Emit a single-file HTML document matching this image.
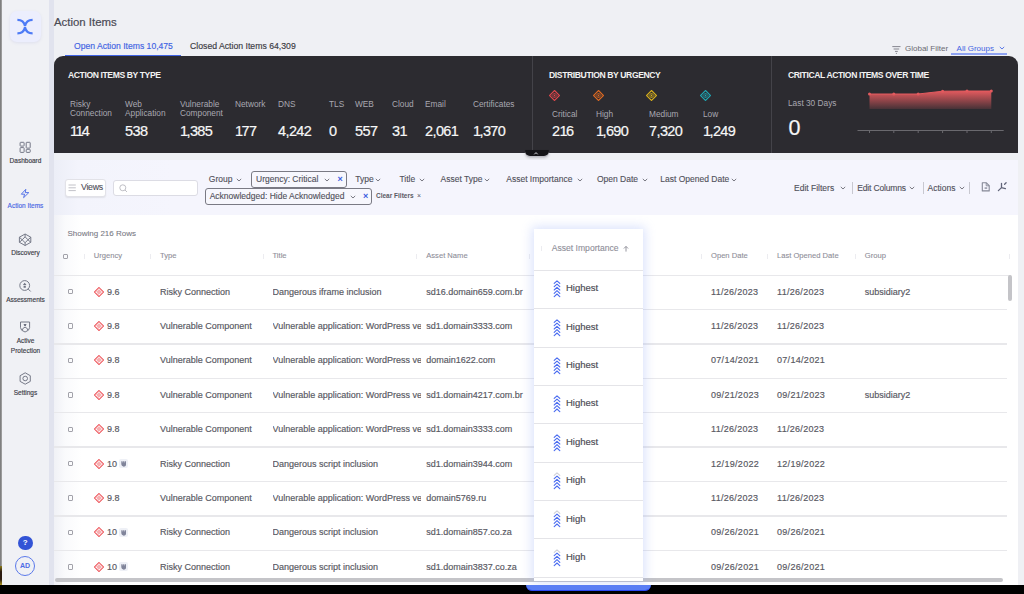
<!DOCTYPE html>
<html><head><meta charset="utf-8">
<style>
*{margin:0;padding:0;box-sizing:border-box}
html,body{width:1024px;height:594px;overflow:hidden;background:#000;font-family:"Liberation Sans",sans-serif}
.a{position:absolute;white-space:nowrap}
#app{position:absolute;left:0;top:0;width:1024px;height:585px;background:#eff0f4;overflow:hidden}
#lb{position:absolute;left:0;top:0;width:2px;height:585px;background:linear-gradient(90deg,#727272,#a8a8a8)}
#sb{position:absolute;left:2px;top:0;width:47px;height:585px;background:#f0f1f5;border-bottom-left-radius:3px}
#sbs{position:absolute;left:49px;top:0;width:5px;height:585px;background:#e1e3ee}
.nav{position:absolute;left:2px;width:47px;text-align:center;font-size:6.5px;color:#3c3c46;line-height:8px;-webkit-text-stroke:0.15px currentColor}
.logo{position:absolute;left:10px;top:11px;width:31px;height:31px;border-radius:7px;background:#eceefd;box-shadow:0 1px 3px rgba(120,130,200,.15)}
#panel{position:absolute;left:54px;top:56px;width:964px;height:97px;background:#2c2b30;border-radius:9px 9px 0 0}
.ph{position:absolute;font-weight:bold;color:#f2f2f2;font-size:8.6px;letter-spacing:-0.4px}
.pl{position:absolute;color:#a9a8b0;font-size:8.3px;line-height:9.4px}
.pn{position:absolute;color:#f7f7f7;font-size:14.5px;line-height:16px;letter-spacing:-0.6px;-webkit-text-stroke:0.2px #f7f7f7}
.o{letter-spacing:-1.6px}
.div{position:absolute;top:0;width:1px;height:97px;background:#444349}
#fbar{position:absolute;left:54px;top:160px;width:964px;height:55.6px;background:linear-gradient(90deg,#eceef7,#f3f4fc 24px,#f5f5fd 120px)}
.ff{position:absolute;font-size:8.5px;color:#50505a;line-height:10px;-webkit-text-stroke:0.12px #50505a}
.chip{position:absolute;border:1px solid #7a7a84;border-radius:3px;background:#f7f7fd;font-size:8.5px;color:#50505a;line-height:14px}
#tbl{position:absolute;left:54px;top:215px;width:964px;height:370px;background:#fff}
.th{position:absolute;font-size:7.6px;color:#8e8e98;line-height:9px;-webkit-text-stroke:0.1px #8e8e98}
.td{position:absolute;font-size:9px;color:#595963;line-height:10px;-webkit-text-stroke:0.17px #595963}
.dt{letter-spacing:0.3px}
.rb{position:absolute;left:54px;width:953px;height:1.4px;background:#e8e8eb}
.cb{position:absolute;width:6px;height:6px;border:1px solid #a2a2aa;border-radius:1px}
</style></head><body>
<div id="app">
  <div id="lb"></div>
  <div class="a" style="left:0;top:566px;width:2.3px;height:19px;background:linear-gradient(180deg,#8a7a18,#2a1a10 30%,#2a1a10 70%,#b09a20)"></div>
  <div id="sb"></div>
  <div id="sbs"></div>
  <div class="logo"></div>
  <svg class="a" style="left:14px;top:16px" width="24" height="21" viewBox="14 16 24 21"><path d="M17.4 19.9 C21.8 19.9 24.2 22 25 26 C25.8 22 28.2 19.9 32.6 19.9 M17.4 33.3 C21.8 33.3 24.2 31.2 25 27.2 C25.8 31.2 28.2 33.3 32.6 33.3" fill="none" stroke="#4d7bf6" stroke-width="2.2" stroke-linecap="butt" stroke-linejoin="miter" stroke-miterlimit="2"/></svg>
  <svg class="a" style="left:18px;top:140px" width="14" height="14" viewBox="18 140 14 14"><g fill="none" stroke="#747887" stroke-width="1"><rect x="20.1" y="142.3" width="4" height="3.8" rx="0.6"/><rect x="20.1" y="147.6" width="4" height="4.8" rx="0.6"/><rect x="26.2" y="142.3" width="4" height="5.8" rx="0.6"/><rect x="26.2" y="149.3" width="4" height="3.1" rx="0.6"/></g></svg>
  <div class="nav" style="top:156.8px">Dashboard</div>
  <svg class="a" style="left:18px;top:187px" width="14" height="14" viewBox="18 187 14 14"><path d="M25.8 189.3 L21.3 194.2 L24.6 194.2 L23.6 197.7 L28.8 192.6 L25.3 192.6 Z" fill="none" stroke="#4f6ee6" stroke-width="0.95" stroke-linejoin="round"/></svg>
  <div class="nav" style="top:202px;color:#4a68e4">Action Items</div>
  <svg class="a" style="left:18px;top:232px" width="14" height="16" viewBox="18 232 14 16"><g fill="none" stroke="#6f7382" stroke-width="0.95" stroke-linejoin="round"><path d="M25.1 234 L30.8 237.2 L30.8 242.3 L25.1 245.5 L19.4 242.3 L19.4 237.2 Z"/><path d="M25.1 236.8 L28 239.8 L25.1 242.7 L22.2 239.8 Z"/><path d="M25.1 234 V236.8 M30.8 237.2 L28 239.8 M30.8 242.3 L28 239.8 M25.1 245.5 V242.7 M19.4 242.3 L22.2 239.8 M19.4 237.2 L22.2 239.8"/></g></svg>
  <div class="nav" style="top:249px">Discovery</div>
  <svg class="a" style="left:18px;top:279px" width="14" height="14" viewBox="18 279 14 14"><g fill="none" stroke="#6f7382" stroke-width="0.95"><circle cx="24.7" cy="285.5" r="4.9"/><path d="M28.3 289.1 L30.4 291.2" stroke-linecap="round"/></g><path d="M24.7 282.8 L26.5 285 H22.9 Z M23.6 285.8 H25.8 V287.8 H23.6Z" fill="#6f7382"/></svg>
  <div class="nav" style="top:296px">Assessments</div>
  <svg class="a" style="left:18px;top:320px" width="14" height="14" viewBox="18 320 14 14"><path d="M20.5 322 H29.6 V327.6 Q29.6 330.6 25.05 332 Q20.5 330.6 20.5 327.6 Z" fill="none" stroke="#6f7382" stroke-width="0.95" stroke-linejoin="round"/><path d="M23.5 324.3 H26.6 L25.05 326.6 Z" fill="#3f4356"/><path d="M22.3 330 Q23 327.3 25.05 327.3 Q27.1 327.3 27.8 330" fill="none" stroke="#6f7382" stroke-width="0.9"/></svg>
  <div class="nav" style="top:336.8px">Active</div>
  <div class="nav" style="top:346.6px">Protection</div>
  <svg class="a" style="left:18px;top:371px" width="14" height="15" viewBox="18 371 14 15"><g fill="none" stroke="#6f7382" stroke-width="0.95" stroke-linejoin="round"><path d="M25.2 372.8 L30.3 375.7 L30.3 381.4 L25.2 384.2 L20.1 381.4 L20.1 375.7 Z"/><circle cx="25.2" cy="378.5" r="2.3"/></g></svg>
  <div class="nav" style="top:388.5px">Settings</div>
  <div class="a" style="left:17.8px;top:535.5px;width:14.8px;height:14.8px;border-radius:50%;background:#3354d6;color:#fff;font-size:8px;font-weight:bold;text-align:center;line-height:14.8px">?</div>
  <div class="a" style="left:15px;top:556px;width:20px;height:20px;border-radius:50%;border:1px solid #5b79ea;color:#4d6be6;font-size:7px;font-weight:bold;text-align:center;line-height:18px">AD</div>
  <svg class="a" style="left:891px;top:44.5px" width="11" height="10" viewBox="891 44 11 10"><path d="M892.3 45.6 H900.5 M893.6 48 H899.2 M895 50.4 H897.8 M895.9 52.4 H896.9" stroke="#7a7a84" stroke-width="0.9"/></svg>
  <div class="a" style="left:905px;top:44px;font-size:8px;color:#6a6a72;line-height:10px">Global Filter</div>
  <div class="a" style="left:956.6px;top:44px;font-size:8px;color:#3f63e3;line-height:10px">All Groups</div>
  <svg class="a" style="left:999px;top:46.3px" width="6" height="4" viewBox="0 0 6 4"><path d="M0.8 0.9 L3 3 L5.2 0.9" fill="none" stroke="#4a6ae6" stroke-width="0.9"/></svg>
  <div class="a" style="left:951.3px;top:53px;width:56px;height:1.5px;background:#8fa3f2"></div>
  <div class="a" style="left:54px;top:15px;font-size:11.4px;color:#4a4a54;line-height:14px;-webkit-text-stroke:0.2px #4a4a54">Action Items</div>
  <div class="a" style="left:74px;top:41px;font-size:8.6px;color:#3f63e3;line-height:10px;-webkit-text-stroke:0.15px #3f63e3">Open Action Items 10,475</div>
  <div class="a" style="left:65px;top:54.5px;width:116px;height:1.5px;background:#3f63e3"></div>
  <div class="a" style="left:190px;top:41px;font-size:8.7px;color:#3a3a42;line-height:10px;-webkit-text-stroke:0.15px #3a3a42">Closed Action Items 64,309</div>

  <div id="panel">
    <div class="ph" style="left:14px;top:14px">ACTION ITEMS BY TYPE</div>
    <div class="pl" style="left:16px;top:44px">Risky<br>Connection</div>
    <div class="pl" style="left:71px;top:44px">Web<br>Application</div>
    <div class="pl" style="left:126px;top:44px">Vulnerable<br>Component</div>
    <div class="pl" style="left:181px;top:44px">Network</div>
    <div class="pl" style="left:224px;top:44px">DNS</div>
    <div class="pl" style="left:275px;top:44px">TLS</div>
    <div class="pl" style="left:301px;top:44px">WEB</div>
    <div class="pl" style="left:338px;top:44px">Cloud</div>
    <div class="pl" style="left:371px;top:44px">Email</div>
    <div class="pl" style="left:419px;top:44px">Certificates</div>
    <div class="pn" style="left:16px;top:67px"><span class="o">1</span><span class="o">1</span>4</div>
    <div class="pn" style="left:71px;top:67px">538</div>
    <div class="pn" style="left:126px;top:67px"><span class="o">1</span>,385</div>
    <div class="pn" style="left:181px;top:67px"><span class="o">1</span>77</div>
    <div class="pn" style="left:224px;top:67px">4,242</div>
    <div class="pn" style="left:275px;top:67px">0</div>
    <div class="pn" style="left:301px;top:67px">557</div>
    <div class="pn" style="left:338px;top:67px">3<span class="o">1</span></div>
    <div class="pn" style="left:371px;top:67px">2,06<span class="o">1</span></div>
    <div class="pn" style="left:419px;top:67px"><span class="o">1</span>,370</div>
    <div class="div" style="left:478px"></div>
    <div class="ph" style="left:495px;top:14px">DISTRIBUTION BY URGENCY</div>
    <svg class="a" style="left:495px;top:34px" width="11" height="11" viewBox="0 0 11 11"><path d="M5.5 0.5L10.5 5.5L5.5 10.5L0.5 5.5Z" fill="none" stroke="#e0474c" stroke-width="1.1"/><path d="M5.5 3L8 5.5L5.5 8L3 5.5Z" fill="none" stroke="#e0474c" stroke-width="0.9"/><circle cx="5.5" cy="5.5" r="0.9" fill="#e0474c"/></svg>
    <svg class="a" style="left:539px;top:34px" width="11" height="11" viewBox="0 0 11 11"><path d="M5.5 0.5L10.5 5.5L5.5 10.5L0.5 5.5Z" fill="none" stroke="#e06a22" stroke-width="1.1"/><path d="M5.5 3L8 5.5L5.5 8L3 5.5Z" fill="none" stroke="#e06a22" stroke-width="0.9"/><circle cx="5.5" cy="5.5" r="0.9" fill="#e06a22"/></svg>
    <svg class="a" style="left:592px;top:34px" width="11" height="11" viewBox="0 0 11 11"><path d="M5.5 0.5L10.5 5.5L5.5 10.5L0.5 5.5Z" fill="none" stroke="#d9b01c" stroke-width="1.1"/><path d="M5.5 3L8 5.5L5.5 8L3 5.5Z" fill="none" stroke="#d9b01c" stroke-width="0.9"/><circle cx="5.5" cy="5.5" r="0.9" fill="#d9b01c"/></svg>
    <svg class="a" style="left:646px;top:34px" width="11" height="11" viewBox="0 0 11 11"><path d="M5.5 0.5L10.5 5.5L5.5 10.5L0.5 5.5Z" fill="none" stroke="#1fa7b3" stroke-width="1.1"/><path d="M5.5 3L8 5.5L5.5 8L3 5.5Z" fill="none" stroke="#1fa7b3" stroke-width="0.9"/><circle cx="5.5" cy="5.5" r="0.9" fill="#1fa7b3"/></svg>
    <div class="pl" style="left:498px;top:53.8px">Critical</div>
    <div class="pl" style="left:542px;top:53.8px">High</div>
    <div class="pl" style="left:595px;top:53.8px">Medium</div>
    <div class="pl" style="left:649px;top:53.8px">Low</div>
    <div class="pn" style="left:498px;top:67px">2<span class="o">1</span>6</div>
    <div class="pn" style="left:542px;top:67px"><span class="o">1</span>,690</div>
    <div class="pn" style="left:595px;top:67px">7,320</div>
    <div class="pn" style="left:649px;top:67px"><span class="o">1</span>,249</div>
    <div class="div" style="left:717px"></div>
    <div class="ph" style="left:734px;top:14px">CRITICAL ACTION ITEMS OVER TIME</div>
    <div class="pl" style="left:734px;top:42.7px">Last 30 Days</div>
    <div class="pn" style="left:734.5px;top:60.3px;font-size:21.5px;line-height:24px">0</div>
    <svg class="a" style="left:800px;top:28px" width="160" height="52" viewBox="0 0 160 52">
      <defs><linearGradient id="g1" x1="0" y1="0" x2="0" y2="1"><stop offset="0" stop-color="#e25a5e"/><stop offset="1" stop-color="#e25a5e" stop-opacity="0.15"/></linearGradient></defs>
      <path d="M15.5 10 L39.8 10 L64.2 10 L88.6 7.2 L113 7 L137.3 7 L137.3 25 L15.5 25 Z" fill="url(#g1)"/>
      <path d="M15.5 10 L39.8 10 L64.2 10 L88.6 7.2 L113 7 L137.3 7" fill="none" stroke="#e25a5e" stroke-width="1"/>
      <g fill="#e25a5e"><circle cx="15.5" cy="10" r="1.5"/><circle cx="39.8" cy="10" r="1.5"/><circle cx="64.2" cy="10" r="1.5"/><circle cx="88.6" cy="7.2" r="1.5"/><circle cx="113" cy="7" r="1.5"/><circle cx="137.3" cy="7" r="1.5"/></g>
      <path d="M3.5 46.5 H149.7" stroke="#6a696e" stroke-width="1"/>
      <g stroke="#6a696e" stroke-width="1"><path d="M15.5 46 V49"/><path d="M39.8 46 V49"/><path d="M64.2 46 V49"/><path d="M88.6 46 V49"/><path d="M113 46 V49"/><path d="M137.3 46 V49"/></g>
    </svg>
  </div>
  <div class="a" style="left:525px;top:149.5px;width:23.5px;height:6.7px;background:#141416;border-radius:1px 1px 5px 5px;box-shadow:0 1.2px 0 rgba(185,185,192,.8),0 2px 3px rgba(0,0,0,.2)"></div>
  <svg class="a" style="left:532px;top:150.5px" width="8" height="4" viewBox="0 0 8 4"><path d="M2.3 3.3 L4 1.6 L5.7 3.3" fill="none" stroke="#d8d8dc" stroke-width="1"/></svg>

<!--GEN-->
  <div id="fbar"></div>
  <div class="a" style="left:65px;top:178.5px;width:41px;height:18px;border:1px solid #e2e2e8;border-radius:3px;background:#fff;box-shadow:0 1px 1.5px rgba(0,0,0,.08)"></div>
  <svg class="a" style="left:67.5px;top:184px" width="9" height="8" viewBox="0 0 9 8"><path d="M0.5 1H7.8M0.5 3.8H7.8M0.5 6.6H7.8" stroke="#b2b2ba" stroke-width="0.8"/></svg>
  <div class="a ff" style="left:81px;top:182.3px;font-size:8.8px;letter-spacing:-0.3px">Views</div>
  <div class="a" style="left:113px;top:180px;width:85px;height:16px;border:1px solid #dcdce4;border-radius:3px;background:#fff"></div>
  <svg class="a" style="left:119px;top:184px" width="9" height="9" viewBox="0 0 9 9"><circle cx="3.8" cy="3.8" r="3" fill="none" stroke="#b0b0b8" stroke-width="0.8"/><path d="M6 6L8 8" stroke="#b0b0b8" stroke-width="0.8"/></svg>
  <div class="a ff" style="left:208.8px;top:174px">Group</div>
  <svg class="a" style="left:236px;top:177.5px" width="6" height="4" viewBox="0 0 6 4"><path d="M0.8 0.9 L3 3 L5.2 0.9" fill="none" stroke="#6a6a74" stroke-width="0.9"/></svg>
  <div class="a ff" style="left:355.3px;top:174px">Type</div>
  <svg class="a" style="left:375px;top:177.5px" width="6" height="4" viewBox="0 0 6 4"><path d="M0.8 0.9 L3 3 L5.2 0.9" fill="none" stroke="#6a6a74" stroke-width="0.9"/></svg>
  <div class="a ff" style="left:399.4px;top:174px">Title</div>
  <svg class="a" style="left:419px;top:177.5px" width="6" height="4" viewBox="0 0 6 4"><path d="M0.8 0.9 L3 3 L5.2 0.9" fill="none" stroke="#6a6a74" stroke-width="0.9"/></svg>
  <div class="a ff" style="left:440.6px;top:174px">Asset Type</div>
  <svg class="a" style="left:484px;top:177.5px" width="6" height="4" viewBox="0 0 6 4"><path d="M0.8 0.9 L3 3 L5.2 0.9" fill="none" stroke="#6a6a74" stroke-width="0.9"/></svg>
  <div class="a ff" style="left:506.25px;top:174px">Asset Importance</div>
  <svg class="a" style="left:577px;top:177.5px" width="6" height="4" viewBox="0 0 6 4"><path d="M0.8 0.9 L3 3 L5.2 0.9" fill="none" stroke="#6a6a74" stroke-width="0.9"/></svg>
  <div class="a ff" style="left:596.9px;top:174px">Open Date</div>
  <svg class="a" style="left:642px;top:177.5px" width="6" height="4" viewBox="0 0 6 4"><path d="M0.8 0.9 L3 3 L5.2 0.9" fill="none" stroke="#6a6a74" stroke-width="0.9"/></svg>
  <div class="a ff" style="left:660.3px;top:174px">Last Opened Date</div>
  <svg class="a" style="left:731px;top:177.5px" width="6" height="4" viewBox="0 0 6 4"><path d="M0.8 0.9 L3 3 L5.2 0.9" fill="none" stroke="#6a6a74" stroke-width="0.9"/></svg>
  <div class="chip a" style="left:250.5px;top:170.5px;width:96px;height:17px"></div>
  <div class="a ff" style="left:256px;top:174px">Urgency: Critical</div>
  <svg class="a" style="left:324px;top:177.5px" width="6" height="4" viewBox="0 0 6 4"><path d="M0.8 0.9 L3 3 L5.2 0.9" fill="none" stroke="#6a6a74" stroke-width="0.9"/></svg>
  <div class="a" style="left:337.5px;top:172.5px;font-size:9px;font-weight:bold;color:#3b5de0;line-height:12px">×</div>
  <div class="chip a" style="left:204.5px;top:188px;width:167.5px;height:16.5px"></div>
  <div class="a ff" style="left:209.7px;top:191px">Acknowledged: Hide Acknowledged</div>
  <svg class="a" style="left:350px;top:194.5px" width="6" height="4" viewBox="0 0 6 4"><path d="M0.8 0.9 L3 3 L5.2 0.9" fill="none" stroke="#6a6a74" stroke-width="0.9"/></svg>
  <div class="a" style="left:363px;top:189.5px;font-size:9px;font-weight:bold;color:#3b5de0;line-height:12px">×</div>
  <div class="a" style="left:376px;top:191px;font-size:6.5px;font-weight:bold;color:#5a5a64;line-height:10px">Clear Filters</div>
  <div class="a" style="left:417px;top:191px;font-size:7px;color:#5a5a64;line-height:10px">×</div>
  <div class="a ff" style="left:794px;top:182.5px;letter-spacing:0px">Edit Filters</div>
  <svg class="a" style="left:840px;top:186px" width="6" height="4" viewBox="0 0 6 4"><path d="M0.8 0.9 L3 3 L5.2 0.9" fill="none" stroke="#6a6a74" stroke-width="0.9"/></svg>
  <div class="a ff" style="left:857.3px;top:182.5px;letter-spacing:-0.17px">Edit Columns</div>
  <svg class="a" style="left:909.2px;top:186px" width="6" height="4" viewBox="0 0 6 4"><path d="M0.8 0.9 L3 3 L5.2 0.9" fill="none" stroke="#6a6a74" stroke-width="0.9"/></svg>
  <div class="a ff" style="left:927.6px;top:182.5px;letter-spacing:0px">Actions</div>
  <svg class="a" style="left:959px;top:186px" width="6" height="4" viewBox="0 0 6 4"><path d="M0.8 0.9 L3 3 L5.2 0.9" fill="none" stroke="#6a6a74" stroke-width="0.9"/></svg>
  <div class="a" style="left:852px;top:181.5px;width:1px;height:12px;background:#c8c8d0"></div>
  <div class="a" style="left:922.5px;top:181.5px;width:1px;height:12px;background:#c8c8d0"></div>
  <div class="a" style="left:969.4px;top:181.5px;width:1px;height:12px;background:#c8c8d0"></div>
  <svg class="a" style="left:980px;top:181px" width="12" height="12" viewBox="980 181 12 12"><path d="M982.3 182.8 H986.4 L989.2 185.6 V190.9 H982.3 Z" fill="none" stroke="#858896" stroke-width="1.1" stroke-linejoin="round"/><path d="M986.2 182.9 V185.8 H989.1" fill="none" stroke="#858896" stroke-width="0.9"/><rect x="984.6" y="187.3" width="2.6" height="1.6" fill="#9a9caa"/></svg>
  <svg class="a" style="left:996px;top:181px" width="12" height="12" viewBox="996 181 12 12"><path d="M1001.5 183.3 V187.6 M1001.5 187.6 L998.4 190.6 M1001.5 187.6 L1005.4 188.6 M1004.6 184.3 L1006.1 182.8" fill="none" stroke="#62657a" stroke-width="1.3" stroke-linecap="round"/></svg>
  <div id="tbl"></div>
  <div class="a" style="left:54px;top:215px;width:28px;height:370px;background:linear-gradient(90deg,rgba(240,241,246,1),rgba(246,247,250,.6) 40%,rgba(255,255,255,0))"></div>
  <div class="a th" style="left:67.5px;top:228.5px;font-size:8px;color:#75757e;line-height:10px">Showing 216 Rows</div>
  <div class="cb a" style="left:62.6px;top:253.6px;width:5.8px;height:5.8px"></div>
  <div class="a th" style="left:93.8px;top:251.3px">Urgency</div>
  <div class="a" style="left:84px;top:254px;width:1px;height:5px;background:#ececf0"></div>
  <div class="a th" style="left:160.1px;top:251.3px">Type</div>
  <div class="a" style="left:150.1px;top:254px;width:1px;height:5px;background:#ececf0"></div>
  <div class="a th" style="left:272.5px;top:251.3px">Title</div>
  <div class="a" style="left:262.5px;top:254px;width:1px;height:5px;background:#ececf0"></div>
  <div class="a th" style="left:426.25px;top:251.3px">Asset Name</div>
  <div class="a" style="left:416px;top:254px;width:1px;height:5px;background:#ececf0"></div>
  <div class="a th" style="left:711px;top:251.3px">Open Date</div>
  <div class="a" style="left:701px;top:254px;width:1px;height:5px;background:#ececf0"></div>
  <div class="a th" style="left:777px;top:251.3px">Last Opened Date</div>
  <div class="a" style="left:766.7px;top:254px;width:1px;height:5px;background:#ececf0"></div>
  <div class="a th" style="left:864.8px;top:251.3px">Group</div>
  <div class="a" style="left:854.8px;top:254px;width:1px;height:5px;background:#ececf0"></div>
  <div class="a" style="left:1009px;top:254px;width:1px;height:5px;background:#ececf0"></div>
  <div class="a" style="left:528.5px;top:254px;width:1px;height:5px;background:#ececf0"></div>
  <div class="rb a" style="top:274.5px;height:1.5px;width:957px"></div>
  <div class="cb a" style="left:67.9px;top:288.9px;width:5.5px;height:5.5px"></div>
  <svg class="a" style="left:94px;top:286.6px" width="10" height="10" viewBox="0 0 10 10"><path d="M5 0.5L9.5 5L5 9.5L0.5 5Z" fill="#fff" stroke="#ec4a50" stroke-width="1.05"/><path d="M5 2.7L7.3 5L5 7.3L2.7 5Z" fill="#fff" stroke="#ee6a6e" stroke-width="0.75"/><circle cx="5" cy="5" r="0.8" fill="#ec4a50"/></svg>
  <div class="a td" style="left:107px;top:286.6px">9.6</div>
  <div class="a td" style="left:160.1px;top:286.6px">Risky Connection</div>
  <div class="a td" style="left:272.5px;top:286.6px;width:148px;overflow:hidden">Dangerous iframe inclusion</div>
  <div class="a td" style="left:426.25px;top:286.6px">sd16.domain659.com.br</div>
  <div class="a td dt" style="left:711px;top:286.6px">11/26/2023</div>
  <div class="a td dt" style="left:777px;top:286.6px">11/26/2023</div>
  <div class="a td" style="left:864.8px;top:286.6px">subsidiary2</div>
  <div class="rb a" style="top:308.8px"></div>
  <div class="cb a" style="left:67.9px;top:323.3px;width:5.5px;height:5.5px"></div>
  <svg class="a" style="left:94px;top:321.0px" width="10" height="10" viewBox="0 0 10 10"><path d="M5 0.5L9.5 5L5 9.5L0.5 5Z" fill="#fff" stroke="#ec4a50" stroke-width="1.05"/><path d="M5 2.7L7.3 5L5 7.3L2.7 5Z" fill="#fff" stroke="#ee6a6e" stroke-width="0.75"/><circle cx="5" cy="5" r="0.8" fill="#ec4a50"/></svg>
  <div class="a td" style="left:107px;top:321.0px">9.8</div>
  <div class="a td" style="left:160.1px;top:321.0px">Vulnerable Component</div>
  <div class="a td" style="left:272.5px;top:321.0px;width:148px;overflow:hidden">Vulnerable application: WordPress version</div>
  <div class="a td" style="left:426.25px;top:321.0px">sd1.domain3333.com</div>
  <div class="a td dt" style="left:711px;top:321.0px">11/26/2023</div>
  <div class="a td dt" style="left:777px;top:321.0px">11/26/2023</div>
  <div class="rb a" style="top:343.2px"></div>
  <div class="cb a" style="left:67.9px;top:357.7px;width:5.5px;height:5.5px"></div>
  <svg class="a" style="left:94px;top:355.4px" width="10" height="10" viewBox="0 0 10 10"><path d="M5 0.5L9.5 5L5 9.5L0.5 5Z" fill="#fff" stroke="#ec4a50" stroke-width="1.05"/><path d="M5 2.7L7.3 5L5 7.3L2.7 5Z" fill="#fff" stroke="#ee6a6e" stroke-width="0.75"/><circle cx="5" cy="5" r="0.8" fill="#ec4a50"/></svg>
  <div class="a td" style="left:107px;top:355.4px">9.8</div>
  <div class="a td" style="left:160.1px;top:355.4px">Vulnerable Component</div>
  <div class="a td" style="left:272.5px;top:355.4px;width:148px;overflow:hidden">Vulnerable application: WordPress version</div>
  <div class="a td" style="left:426.25px;top:355.4px">domain1622.com</div>
  <div class="a td dt" style="left:711px;top:355.4px">07/14/2021</div>
  <div class="a td dt" style="left:777px;top:355.4px">07/14/2021</div>
  <div class="rb a" style="top:377.6px"></div>
  <div class="cb a" style="left:67.9px;top:392.1px;width:5.5px;height:5.5px"></div>
  <svg class="a" style="left:94px;top:389.8px" width="10" height="10" viewBox="0 0 10 10"><path d="M5 0.5L9.5 5L5 9.5L0.5 5Z" fill="#fff" stroke="#ec4a50" stroke-width="1.05"/><path d="M5 2.7L7.3 5L5 7.3L2.7 5Z" fill="#fff" stroke="#ee6a6e" stroke-width="0.75"/><circle cx="5" cy="5" r="0.8" fill="#ec4a50"/></svg>
  <div class="a td" style="left:107px;top:389.8px">9.8</div>
  <div class="a td" style="left:160.1px;top:389.8px">Vulnerable Component</div>
  <div class="a td" style="left:272.5px;top:389.8px;width:148px;overflow:hidden">Vulnerable application: WordPress version</div>
  <div class="a td" style="left:426.25px;top:389.8px">sd1.domain4217.com.br</div>
  <div class="a td dt" style="left:711px;top:389.8px">09/21/2023</div>
  <div class="a td dt" style="left:777px;top:389.8px">09/21/2023</div>
  <div class="a td" style="left:864.8px;top:389.8px">subsidiary2</div>
  <div class="rb a" style="top:412.0px"></div>
  <div class="cb a" style="left:67.9px;top:426.5px;width:5.5px;height:5.5px"></div>
  <svg class="a" style="left:94px;top:424.2px" width="10" height="10" viewBox="0 0 10 10"><path d="M5 0.5L9.5 5L5 9.5L0.5 5Z" fill="#fff" stroke="#ec4a50" stroke-width="1.05"/><path d="M5 2.7L7.3 5L5 7.3L2.7 5Z" fill="#fff" stroke="#ee6a6e" stroke-width="0.75"/><circle cx="5" cy="5" r="0.8" fill="#ec4a50"/></svg>
  <div class="a td" style="left:107px;top:424.2px">9.8</div>
  <div class="a td" style="left:160.1px;top:424.2px">Vulnerable Component</div>
  <div class="a td" style="left:272.5px;top:424.2px;width:148px;overflow:hidden">Vulnerable application: WordPress version</div>
  <div class="a td" style="left:426.25px;top:424.2px">sd1.domain3333.com</div>
  <div class="a td dt" style="left:711px;top:424.2px">11/26/2023</div>
  <div class="a td dt" style="left:777px;top:424.2px">11/26/2023</div>
  <div class="rb a" style="top:446.4px"></div>
  <div class="cb a" style="left:67.9px;top:460.9px;width:5.5px;height:5.5px"></div>
  <svg class="a" style="left:94px;top:458.6px" width="10" height="10" viewBox="0 0 10 10"><path d="M5 0.5L9.5 5L5 9.5L0.5 5Z" fill="#fff" stroke="#ec4a50" stroke-width="1.05"/><path d="M5 2.7L7.3 5L5 7.3L2.7 5Z" fill="#fff" stroke="#ee6a6e" stroke-width="0.75"/><circle cx="5" cy="5" r="0.8" fill="#ec4a50"/></svg>
  <div class="a td" style="left:107px;top:458.6px">10</div>
  <div class="a" style="left:118.8px;top:459.1px;width:9px;height:9px;border-radius:2px;background:#eef0f6"></div><svg class="a" style="left:120.8px;top:460.8px" width="5.5" height="6" viewBox="0 0 5.5 6"><path d="M0.3 0.3 H1.6 V1.4 H2.1 V0.3 H3.4 V1.4 H3.9 V0.3 H5.2 V3.2 Q5.2 5 2.75 5.8 Q0.3 5 0.3 3.2 Z" fill="#80849a"/></svg>
  <div class="a td" style="left:160.1px;top:458.6px">Risky Connection</div>
  <div class="a td" style="left:272.5px;top:458.6px;width:148px;overflow:hidden">Dangerous script inclusion</div>
  <div class="a td" style="left:426.25px;top:458.6px">sd1.domain3944.com</div>
  <div class="a td dt" style="left:711px;top:458.6px">12/19/2022</div>
  <div class="a td dt" style="left:777px;top:458.6px">12/19/2022</div>
  <div class="rb a" style="top:480.8px"></div>
  <div class="cb a" style="left:67.9px;top:495.3px;width:5.5px;height:5.5px"></div>
  <svg class="a" style="left:94px;top:493.0px" width="10" height="10" viewBox="0 0 10 10"><path d="M5 0.5L9.5 5L5 9.5L0.5 5Z" fill="#fff" stroke="#ec4a50" stroke-width="1.05"/><path d="M5 2.7L7.3 5L5 7.3L2.7 5Z" fill="#fff" stroke="#ee6a6e" stroke-width="0.75"/><circle cx="5" cy="5" r="0.8" fill="#ec4a50"/></svg>
  <div class="a td" style="left:107px;top:493.0px">9.8</div>
  <div class="a td" style="left:160.1px;top:493.0px">Vulnerable Component</div>
  <div class="a td" style="left:272.5px;top:493.0px;width:148px;overflow:hidden">Vulnerable application: WordPress version</div>
  <div class="a td" style="left:426.25px;top:493.0px">domain5769.ru</div>
  <div class="a td dt" style="left:711px;top:493.0px">11/26/2023</div>
  <div class="a td dt" style="left:777px;top:493.0px">11/26/2023</div>
  <div class="rb a" style="top:515.2px"></div>
  <div class="cb a" style="left:67.9px;top:529.7px;width:5.5px;height:5.5px"></div>
  <svg class="a" style="left:94px;top:527.4px" width="10" height="10" viewBox="0 0 10 10"><path d="M5 0.5L9.5 5L5 9.5L0.5 5Z" fill="#fff" stroke="#ec4a50" stroke-width="1.05"/><path d="M5 2.7L7.3 5L5 7.3L2.7 5Z" fill="#fff" stroke="#ee6a6e" stroke-width="0.75"/><circle cx="5" cy="5" r="0.8" fill="#ec4a50"/></svg>
  <div class="a td" style="left:107px;top:527.4px">10</div>
  <div class="a" style="left:118.8px;top:527.9px;width:9px;height:9px;border-radius:2px;background:#eef0f6"></div><svg class="a" style="left:120.8px;top:529.6px" width="5.5" height="6" viewBox="0 0 5.5 6"><path d="M0.3 0.3 H1.6 V1.4 H2.1 V0.3 H3.4 V1.4 H3.9 V0.3 H5.2 V3.2 Q5.2 5 2.75 5.8 Q0.3 5 0.3 3.2 Z" fill="#80849a"/></svg>
  <div class="a td" style="left:160.1px;top:527.4px">Risky Connection</div>
  <div class="a td" style="left:272.5px;top:527.4px;width:148px;overflow:hidden">Dangerous script inclusion</div>
  <div class="a td" style="left:426.25px;top:527.4px">sd1.domain857.co.za</div>
  <div class="a td dt" style="left:711px;top:527.4px">09/26/2021</div>
  <div class="a td dt" style="left:777px;top:527.4px">09/26/2021</div>
  <div class="rb a" style="top:549.6px"></div>
  <div class="cb a" style="left:67.9px;top:564.1px;width:5.5px;height:5.5px"></div>
  <svg class="a" style="left:94px;top:561.8px" width="10" height="10" viewBox="0 0 10 10"><path d="M5 0.5L9.5 5L5 9.5L0.5 5Z" fill="#fff" stroke="#ec4a50" stroke-width="1.05"/><path d="M5 2.7L7.3 5L5 7.3L2.7 5Z" fill="#fff" stroke="#ee6a6e" stroke-width="0.75"/><circle cx="5" cy="5" r="0.8" fill="#ec4a50"/></svg>
  <div class="a td" style="left:107px;top:561.8px">10</div>
  <div class="a" style="left:118.8px;top:562.3px;width:9px;height:9px;border-radius:2px;background:#eef0f6"></div><svg class="a" style="left:120.8px;top:564.0px" width="5.5" height="6" viewBox="0 0 5.5 6"><path d="M0.3 0.3 H1.6 V1.4 H2.1 V0.3 H3.4 V1.4 H3.9 V0.3 H5.2 V3.2 Q5.2 5 2.75 5.8 Q0.3 5 0.3 3.2 Z" fill="#80849a"/></svg>
  <div class="a td" style="left:160.1px;top:561.8px">Risky Connection</div>
  <div class="a td" style="left:272.5px;top:561.8px;width:148px;overflow:hidden">Dangerous script inclusion</div>
  <div class="a td" style="left:426.25px;top:561.8px">sd1.domain3837.co.za</div>
  <div class="a td dt" style="left:711px;top:561.8px">09/26/2021</div>
  <div class="a td dt" style="left:777px;top:561.8px">09/26/2021</div>
  <div class="a" style="left:1007.5px;top:275px;width:4.5px;height:26px;border-radius:2.5px;background:#c4c4c8"></div>
  <div class="a" style="left:54.5px;top:577.5px;width:948px;height:4.5px;border-radius:2.5px;background:#c4c4c8"></div>
  <div class="a" style="left:533.7px;top:228.5px;width:109.3px;height:352px;background:#fff;box-shadow:0 0 10px 2px rgba(140,165,245,.32)"></div>
  <div class="a th" style="left:551.7px;top:243.8px;font-size:8.6px">Asset Importance</div><svg class="a" style="left:621.5px;top:244.8px" width="8" height="8" viewBox="0 0 8 8"><path d="M4 6.6V1.5 M1.9 3.5 L4 1.4 L6.1 3.5" fill="none" stroke="#8a8a94" stroke-width="0.9"/></svg>
  <div class="a" style="left:540.5px;top:246px;width:1px;height:5px;background:#ececf0"></div>
  <div class="a" style="left:533.7px;top:269.9px;width:109.3px;height:1px;background:#e4e4e8"></div>
  <svg class="a" style="left:553.3px;top:280.3px" width="8" height="18" viewBox="0 0 8 18"><g fill="none" stroke-width="1.15" stroke-linecap="round" stroke-linejoin="round"><path d="M1.2 3.40 L4 0.80 L6.8 3.40" stroke="#4a6cf0"/><path d="M1.2 6.70 L4 4.10 L6.8 6.70" stroke="#4a6cf0"/><path d="M1.2 10.00 L4 7.40 L6.8 10.00" stroke="#4a6cf0"/><path d="M1.2 13.30 L4 10.70 L6.8 13.30" stroke="#4a6cf0"/><path d="M1.2 16.60 L4 14.00 L6.8 16.60" stroke="#4a6cf0"/></g></svg>
  <div class="a td" style="left:566px;top:282.4px;font-size:9.5px;line-height:11px;color:#45454e">Highest</div>
  <div class="a" style="left:533.7px;top:308.2px;width:109.3px;height:1px;background:#e4e4e8"></div>
  <svg class="a" style="left:553.3px;top:318.6px" width="8" height="18" viewBox="0 0 8 18"><g fill="none" stroke-width="1.15" stroke-linecap="round" stroke-linejoin="round"><path d="M1.2 3.40 L4 0.80 L6.8 3.40" stroke="#4a6cf0"/><path d="M1.2 6.70 L4 4.10 L6.8 6.70" stroke="#4a6cf0"/><path d="M1.2 10.00 L4 7.40 L6.8 10.00" stroke="#4a6cf0"/><path d="M1.2 13.30 L4 10.70 L6.8 13.30" stroke="#4a6cf0"/><path d="M1.2 16.60 L4 14.00 L6.8 16.60" stroke="#4a6cf0"/></g></svg>
  <div class="a td" style="left:566px;top:320.7px;font-size:9.5px;line-height:11px;color:#45454e">Highest</div>
  <div class="a" style="left:533.7px;top:346.6px;width:109.3px;height:1px;background:#e4e4e8"></div>
  <svg class="a" style="left:553.3px;top:357.0px" width="8" height="18" viewBox="0 0 8 18"><g fill="none" stroke-width="1.15" stroke-linecap="round" stroke-linejoin="round"><path d="M1.2 3.40 L4 0.80 L6.8 3.40" stroke="#4a6cf0"/><path d="M1.2 6.70 L4 4.10 L6.8 6.70" stroke="#4a6cf0"/><path d="M1.2 10.00 L4 7.40 L6.8 10.00" stroke="#4a6cf0"/><path d="M1.2 13.30 L4 10.70 L6.8 13.30" stroke="#4a6cf0"/><path d="M1.2 16.60 L4 14.00 L6.8 16.60" stroke="#4a6cf0"/></g></svg>
  <div class="a td" style="left:566px;top:359.1px;font-size:9.5px;line-height:11px;color:#45454e">Highest</div>
  <div class="a" style="left:533.7px;top:384.9px;width:109.3px;height:1px;background:#e4e4e8"></div>
  <svg class="a" style="left:553.3px;top:395.3px" width="8" height="18" viewBox="0 0 8 18"><g fill="none" stroke-width="1.15" stroke-linecap="round" stroke-linejoin="round"><path d="M1.2 3.40 L4 0.80 L6.8 3.40" stroke="#4a6cf0"/><path d="M1.2 6.70 L4 4.10 L6.8 6.70" stroke="#4a6cf0"/><path d="M1.2 10.00 L4 7.40 L6.8 10.00" stroke="#4a6cf0"/><path d="M1.2 13.30 L4 10.70 L6.8 13.30" stroke="#4a6cf0"/><path d="M1.2 16.60 L4 14.00 L6.8 16.60" stroke="#4a6cf0"/></g></svg>
  <div class="a td" style="left:566px;top:397.4px;font-size:9.5px;line-height:11px;color:#45454e">Highest</div>
  <div class="a" style="left:533.7px;top:423.3px;width:109.3px;height:1px;background:#e4e4e8"></div>
  <svg class="a" style="left:553.3px;top:433.7px" width="8" height="18" viewBox="0 0 8 18"><g fill="none" stroke-width="1.15" stroke-linecap="round" stroke-linejoin="round"><path d="M1.2 3.40 L4 0.80 L6.8 3.40" stroke="#4a6cf0"/><path d="M1.2 6.70 L4 4.10 L6.8 6.70" stroke="#4a6cf0"/><path d="M1.2 10.00 L4 7.40 L6.8 10.00" stroke="#4a6cf0"/><path d="M1.2 13.30 L4 10.70 L6.8 13.30" stroke="#4a6cf0"/><path d="M1.2 16.60 L4 14.00 L6.8 16.60" stroke="#4a6cf0"/></g></svg>
  <div class="a td" style="left:566px;top:435.8px;font-size:9.5px;line-height:11px;color:#45454e">Highest</div>
  <div class="a" style="left:533.7px;top:461.6px;width:109.3px;height:1px;background:#e4e4e8"></div>
  <svg class="a" style="left:553.3px;top:472.0px" width="8" height="18" viewBox="0 0 8 18"><g fill="none" stroke-width="1.15" stroke-linecap="round" stroke-linejoin="round"><path d="M1.2 3.40 L4 0.80 L6.8 3.40" stroke="#d0d1d8"/><path d="M1.2 6.70 L4 4.10 L6.8 6.70" stroke="#4a6cf0"/><path d="M1.2 10.00 L4 7.40 L6.8 10.00" stroke="#4a6cf0"/><path d="M1.2 13.30 L4 10.70 L6.8 13.30" stroke="#4a6cf0"/><path d="M1.2 16.60 L4 14.00 L6.8 16.60" stroke="#4a6cf0"/></g></svg>
  <div class="a td" style="left:566px;top:474.1px;font-size:9.5px;line-height:11px;color:#45454e">High</div>
  <div class="a" style="left:533.7px;top:500.0px;width:109.3px;height:1px;background:#e4e4e8"></div>
  <svg class="a" style="left:553.3px;top:510.4px" width="8" height="18" viewBox="0 0 8 18"><g fill="none" stroke-width="1.15" stroke-linecap="round" stroke-linejoin="round"><path d="M1.2 3.40 L4 0.80 L6.8 3.40" stroke="#d0d1d8"/><path d="M1.2 6.70 L4 4.10 L6.8 6.70" stroke="#4a6cf0"/><path d="M1.2 10.00 L4 7.40 L6.8 10.00" stroke="#4a6cf0"/><path d="M1.2 13.30 L4 10.70 L6.8 13.30" stroke="#4a6cf0"/><path d="M1.2 16.60 L4 14.00 L6.8 16.60" stroke="#4a6cf0"/></g></svg>
  <div class="a td" style="left:566px;top:512.5px;font-size:9.5px;line-height:11px;color:#45454e">High</div>
  <div class="a" style="left:533.7px;top:538.3px;width:109.3px;height:1px;background:#e4e4e8"></div>
  <svg class="a" style="left:553.3px;top:548.7px" width="8" height="18" viewBox="0 0 8 18"><g fill="none" stroke-width="1.15" stroke-linecap="round" stroke-linejoin="round"><path d="M1.2 3.40 L4 0.80 L6.8 3.40" stroke="#d0d1d8"/><path d="M1.2 6.70 L4 4.10 L6.8 6.70" stroke="#4a6cf0"/><path d="M1.2 10.00 L4 7.40 L6.8 10.00" stroke="#4a6cf0"/><path d="M1.2 13.30 L4 10.70 L6.8 13.30" stroke="#4a6cf0"/><path d="M1.2 16.60 L4 14.00 L6.8 16.60" stroke="#4a6cf0"/></g></svg>
  <div class="a td" style="left:566px;top:550.8px;font-size:9.5px;line-height:11px;color:#45454e">High</div>
  <div class="a" style="left:533.7px;top:576.7px;width:109.3px;height:1px;background:#e4e4e8"></div>
<!--/GEN-->
</div>
<div class="a" style="left:525.6px;top:585px;width:125px;height:6px;border-radius:0 0 6px 6px;background:#5a7ef4;border-bottom:1px solid #2b48f2;z-index:5"></div>
</body></html>
